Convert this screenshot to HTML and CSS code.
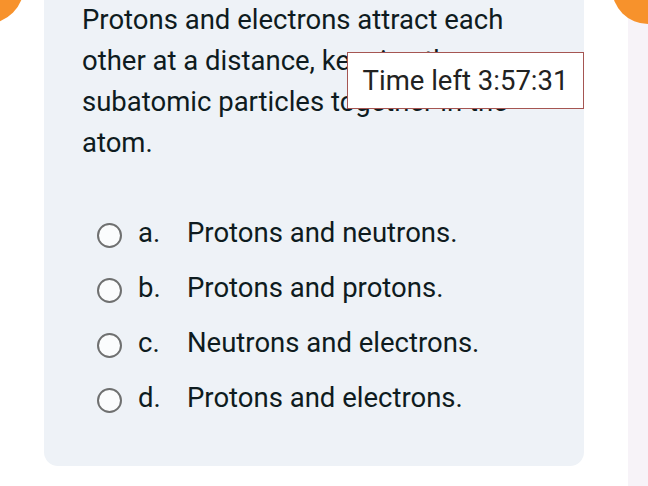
FILE: index.html
```html
<!DOCTYPE html>
<html>
<head>
<meta charset="utf-8">
<link rel="stylesheet" href="styles.css">
</head>
<body>
<div class="page">
  <main class="main">
    <section class="card">
      <p class="question">Protons and electrons attract each other at a distance, keeping the subatomic particles together in the atom.</p>
      <ul class="options">
        <li class="option"><span class="radio"></span><span class="letter">a.</span><span class="answer">Protons and neutrons.</span></li>
        <li class="option"><span class="radio"></span><span class="letter">b.</span><span class="answer">Protons and protons.</span></li>
        <li class="option"><span class="radio"></span><span class="letter">c.</span><span class="answer">Neutrons and electrons.</span></li>
        <li class="option"><span class="radio"></span><span class="letter">d.</span><span class="answer">Protons and electrons.</span></li>
      </ul>
    </section>
  </main>
  <aside class="strip"></aside>
</div>
<div class="blob blob-left"></div>
<div class="blob blob-right"></div>
<div class="timer">Time left 3:57:31</div>
</body>
</html>
```
FILE: styles.css
```css
html, body {
  margin: 0;
  padding: 0;
  background: #ffffff;
  overflow: hidden;
  width: 648px;
  height: 486px;
}
body {
  font-family: Roboto, "Liberation Sans", sans-serif;
  color: #0e1b20;
  position: relative;
}
.page {
  display: flex;
  height: 486px;
}
.main {
  width: 628px;
  flex: none;
}
.strip {
  flex: 1;
  background: #f7f3f8;
}
.card {
  margin: -20px 0 0 44px;
  width: 540px;
  height: 486px;
  box-sizing: border-box;
  background: #eef2f7;
  border-radius: 0 0 14px 14px;
  padding: 19px 38px 0 38px;
}
.question {
  margin: 0;
  font-size: 27.5px;
  line-height: 41px;
  width: 440px;
}
.options {
  list-style: none;
  margin: 42px 0 0 0;
  padding: 0 0 0 15px;
}
.option {
  display: flex;
  align-items: center;
  height: 55px;
  font-size: 27.5px;
}
.radio {
  width: 21px;
  height: 21px;
  border: 2px solid #6f7070;
  border-radius: 50%;
  background: #fbfcfd;
  margin-top: 5px;
  flex: none;
}
.letter {
  margin-left: 16px;
  width: 49px;
}
.blob {
  position: absolute;
  border-radius: 50%;
  background: #f7922c;
}
.blob-left {
  width: 76px;
  height: 76px;
  left: -52px;
  top: -52px;
}
.blob-right {
  width: 72px;
  height: 72px;
  left: 612px;
  top: -48px;
}
.timer {
  position: absolute;
  left: 347px;
  top: 52px;
  width: 237px;
  height: 57px;
  box-sizing: border-box;
  border: 1px solid #a55552;
  background: #ffffff;
  color: #222222;
  font-size: 27.5px;
  display: flex;
  align-items: center;
  justify-content: center;
}
```
